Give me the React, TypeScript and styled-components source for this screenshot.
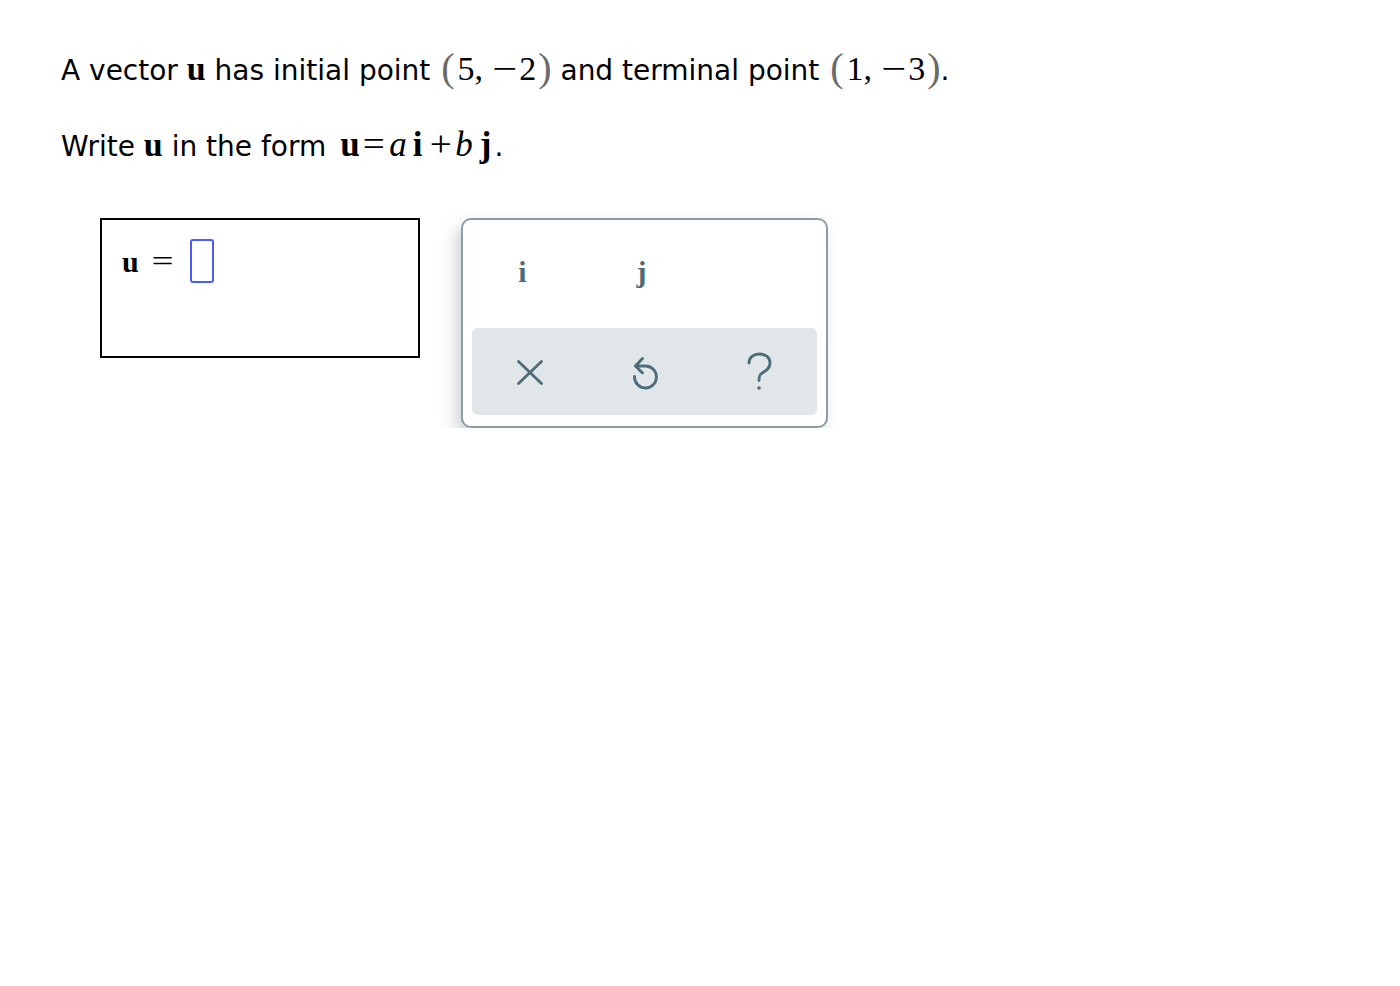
import React from "react";
import styled, { createGlobalStyle } from "styled-components";

const GlobalStyle = createGlobalStyle`
  html, body { margin: 0; padding: 0; background: #ffffff; }
  body { font-family: "DejaVu Sans", Verdana, sans-serif; color: #000; }
`;

const Page = styled.div`
  padding: 51px 0 0 61px;
`;

const Prompt = styled.p<{ after?: number }>`
  margin: 0 0 ${(p) => p.after ?? 0}px 0;
  font-size: 28px;
  line-height: 40px;
  white-space: nowrap;
`;

const Math = styled.span<{ lead?: number; size?: number }>`
  font-family: "Liberation Serif", "Times New Roman", serif;
  font-size: ${(p) => p.size ?? 34}px;
  line-height: 0;
  margin-left: ${(p) => p.lead ?? 0}px;
`;

const Bold = styled.span<{ size?: number }>`
  font-family: "Liberation Serif", "Times New Roman", serif;
  font-weight: bold;
  font-size: ${(p) => (p.size ? `${p.size}px` : "inherit")};
  line-height: 0;
`;

const InlineBold = styled(Bold)`
  font-size: 34px;
`;

const Ital = styled.span`
  font-style: italic;
`;

const Paren = styled.span<{ side: "l" | "r" }>`
  font-family: "Liberation Serif", "Times New Roman", serif;
  font-size: 40px;
  color: #6a6a6a;
  line-height: 0;
  position: relative;
  top: 1px;
  margin: ${(p) => (p.side === "l" ? "0 3px 0 0" : "0 0 0 2px")};
`;

const Sym = styled.span<{ l?: number; r?: number; wide?: boolean }>`
  display: inline-block;
  margin: 0 ${(p) => p.r ?? 0}px 0 ${(p) => p.l ?? 0}px;
  transform: ${(p) => (p.wide ? "scaleX(1.12)" : "none")};
`;

const Minus = styled.span`
  display: inline-block;
  transform: scaleX(1.3);
  margin: 0 5px 0 12px;
`;

const Period = styled.span<{ l?: number }>`
  margin-left: ${(p) => p.l ?? 0}px;
`;

const AnswerRow = styled.div`
  display: flex;
  align-items: flex-start;
  gap: 41px;
  margin: 51px 0 0 39px;
`;

const AnswerBox = styled.div`
  box-sizing: border-box;
  width: 320px;
  height: 140px;
  border: 2px solid #000;
  padding: 19px 0 0 20px;
  font-family: "Liberation Serif", "Times New Roman", serif;
  font-size: 30px;
`;

const AnswerLine = styled.div`
  display: flex;
  align-items: center;
  height: 44px;
`;

const AnswerVar = styled.span`
  font-weight: bold;
  position: relative;
  top: 1px;
`;

const AnswerEq = styled.span`
  display: inline-block;
  transform: scaleX(1.3);
  margin: 0 19px 0 15px;
`;

const Slot = styled.span`
  box-sizing: border-box;
  display: inline-block;
  width: 24px;
  height: 44px;
  border: 2px solid #4a5ef5;
  border-radius: 3px;
`;

const Palette = styled.div`
  box-sizing: border-box;
  width: 367px;
  height: 210px;
  border: 2px solid #8b9ea7;
  border-radius: 10px;
  background: #fff;
  box-shadow: -5px 8px 16px rgba(60, 80, 90, 0.26);
  display: flex;
  flex-direction: column;
`;

const KeyRow = styled.div`
  display: grid;
  grid-template-columns: repeat(3, 119px);
  height: 108px;
  align-items: center;
`;

const SymbolKey = styled.div`
  display: flex;
  justify-content: center;
  align-items: center;
  font-family: "Liberation Serif", "Times New Roman", serif;
  font-weight: bold;
  font-size: 30px;
  color: #4d6b78;
  padding-bottom: 4px;
`;

const ToolBar = styled.div`
  margin: 0 9px 10px 9px;
  height: 87px;
  background: #e1e6e9;
  border-radius: 6px;
  display: grid;
  grid-template-columns: repeat(3, 1fr);
  align-items: center;
  justify-items: center;
`;

const ToolIcon = styled.svg`
  display: block;
  stroke: #4c6c79;
  fill: none;
  stroke-width: 2.8;
  stroke-linecap: round;
  stroke-linejoin: round;
`;

export default function App() {
  return (
    <>
      <GlobalStyle />
      <Page>
        <Prompt after={36}>
          A vector <InlineBold>u</InlineBold> has initial point{" "}
          <Math lead={2}>
            <Paren side="l">(</Paren>5,<Minus>−</Minus>2<Paren side="r">)</Paren>
          </Math>{" "}
          and terminal point{" "}
          <Math lead={2}>
            <Paren side="l">(</Paren>1,<Minus>−</Minus>3<Paren side="r">)</Paren>
          </Math>
          <Period>.</Period>
        </Prompt>
        <Prompt>
          Write <InlineBold>u</InlineBold> in the form{" "}
          <Math lead={5} size={35}>
            <Bold>u</Bold>
            <Sym l={4} r={6} wide>=</Sym>
            <Ital>a</Ital>
            <Sym l={6} r={8}>
              <Bold>i</Bold>
            </Sym>
            <Sym r={5} wide>+</Sym>
            <Ital>b</Ital>
            <Sym l={7}>
              <Bold>j</Bold>
            </Sym>
          </Math>
          <Period l={3}>.</Period>
        </Prompt>
        <AnswerRow>
          <AnswerBox>
            <AnswerLine>
              <AnswerVar>u</AnswerVar>
              <AnswerEq>=</AnswerEq>
              <Slot />
            </AnswerLine>
          </AnswerBox>
          <Palette>
            <KeyRow>
              <SymbolKey>i</SymbolKey>
              <SymbolKey>j</SymbolKey>
              <div />
            </KeyRow>
            <ToolBar>
              <ToolIcon width="28" height="28" viewBox="0 0 28 28">
                <path d="M2.5 3.5 L25.5 25.5 M25.5 3.5 L2.5 25.5" />
              </ToolIcon>
              <ToolIcon width="28" height="36" viewBox="0 0 28 36">
                <path d="M4.5 12 H14 A11 11 0 1 1 3.5 22.5" />
                <path d="M11.5 4.5 L4.5 12 L11.5 19" />
              </ToolIcon>
              <ToolIcon width="28" height="40" viewBox="0 0 28 40">
                <path d="M3 11 C3 5.5 7.5 2 13.5 2 C19.5 2 24 5.5 24 11 C24 17 19 19 15.5 21.5 C13.5 23 13 25 13 28.5" />
                <circle cx="13" cy="36" r="1.8" fill="#4c6c79" stroke="none" />
              </ToolIcon>
            </ToolBar>
          </Palette>
        </AnswerRow>
      </Page>
    </>
  );
}
